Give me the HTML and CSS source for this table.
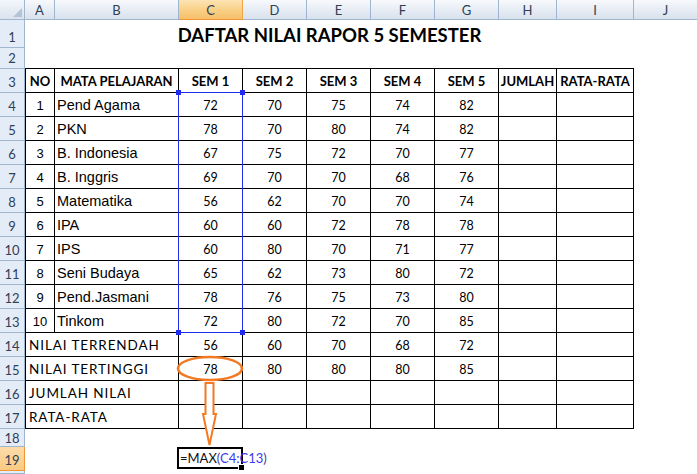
FILE: index.html
```html
<!DOCTYPE html>
<html>
<head>
<meta charset="utf-8">
<link rel="stylesheet" href="styles.css">
</head>
<body>
<div class="sheet">
  <div class="colheads">
    <div class="corner"><svg class="tri" width="10" height="10" viewBox="0 0 10 10"><polygon points="10,1 10,10 1,10" fill="#b4c4d6"/></svg></div>
    <div class="ch wa">A</div>
    <div class="ch wb">B</div>
    <div class="ch wc on">C</div>
    <div class="ch wc">D</div>
    <div class="ch wc">E</div>
    <div class="ch wc">F</div>
    <div class="ch wc">G</div>
    <div class="ch wh">H</div>
    <div class="ch wi">I</div>
    <div class="ch wc">J</div>
  </div>
  <div class="body">
    <div class="rowheads">
      <div class="rh r1">1</div>
      <div class="rh r2">2</div>
      <div class="rh">3</div>
      <div class="rh">4</div>
      <div class="rh">5</div>
      <div class="rh">6</div>
      <div class="rh">7</div>
      <div class="rh">8</div>
      <div class="rh">9</div>
      <div class="rh">10</div>
      <div class="rh">11</div>
      <div class="rh">12</div>
      <div class="rh">13</div>
      <div class="rh">14</div>
      <div class="rh">15</div>
      <div class="rh">16</div>
      <div class="rh">17</div>
      <div class="rh r18">18</div>
      <div class="rh on">19</div>
      <div class="rh rlast"></div>
    </div>
    <div class="cells">
      <div class="title-row"><div class="title">DAFTAR NILAI RAPOR 5 SEMESTER</div></div>
      <div class="row2"></div>
      <div class="tbl">
        <div class="c hd">NO</div><div class="c hd">MATA PELAJARAN</div><div class="c hd">SEM 1</div><div class="c hd">SEM 2</div><div class="c hd">SEM 3</div><div class="c hd">SEM 4</div><div class="c hd">SEM 5</div><div class="c hd">JUMLAH</div><div class="c hd">RATA-RATA</div>

        <div class="c no">1</div><div class="c sub">Pend Agama</div><div class="c">72</div><div class="c">70</div><div class="c">75</div><div class="c">74</div><div class="c">82</div><div class="c"></div><div class="c"></div>
        <div class="c no">2</div><div class="c sub">PKN</div><div class="c">78</div><div class="c">70</div><div class="c">80</div><div class="c">74</div><div class="c">82</div><div class="c"></div><div class="c"></div>
        <div class="c no">3</div><div class="c sub">B. Indonesia</div><div class="c">67</div><div class="c">75</div><div class="c">72</div><div class="c">70</div><div class="c">77</div><div class="c"></div><div class="c"></div>
        <div class="c no">4</div><div class="c sub">B. Inggris</div><div class="c">69</div><div class="c">70</div><div class="c">70</div><div class="c">68</div><div class="c">76</div><div class="c"></div><div class="c"></div>
        <div class="c no">5</div><div class="c sub">Matematika</div><div class="c">56</div><div class="c">62</div><div class="c">70</div><div class="c">70</div><div class="c">74</div><div class="c"></div><div class="c"></div>
        <div class="c no">6</div><div class="c sub">IPA</div><div class="c">60</div><div class="c">60</div><div class="c">72</div><div class="c">78</div><div class="c">78</div><div class="c"></div><div class="c"></div>
        <div class="c no">7</div><div class="c sub">IPS</div><div class="c">60</div><div class="c">80</div><div class="c">70</div><div class="c">71</div><div class="c">77</div><div class="c"></div><div class="c"></div>
        <div class="c no">8</div><div class="c sub">Seni Budaya</div><div class="c">65</div><div class="c">62</div><div class="c">73</div><div class="c">80</div><div class="c">72</div><div class="c"></div><div class="c"></div>
        <div class="c no">9</div><div class="c sub">Pend.Jasmani</div><div class="c">78</div><div class="c">76</div><div class="c">75</div><div class="c">73</div><div class="c">80</div><div class="c"></div><div class="c"></div>
        <div class="c no">10</div><div class="c sub">Tinkom</div><div class="c">72</div><div class="c">80</div><div class="c">72</div><div class="c">70</div><div class="c">85</div><div class="c"></div><div class="c"></div>

        <div class="c lbl">NILAI TERRENDAH</div><div class="c">56</div><div class="c">60</div><div class="c">70</div><div class="c">68</div><div class="c">72</div><div class="c"></div><div class="c"></div>
        <div class="c lbl">NILAI TERTINGGI</div><div class="c">78</div><div class="c">80</div><div class="c">80</div><div class="c">80</div><div class="c">85</div><div class="c"></div><div class="c"></div>
        <div class="c lbl">JUMLAH NILAI</div><div class="c"></div><div class="c"></div><div class="c"></div><div class="c"></div><div class="c"></div><div class="c"></div><div class="c"></div>
        <div class="c lbl">RATA-RATA</div><div class="c"></div><div class="c"></div><div class="c"></div><div class="c"></div><div class="c"></div><div class="c"></div><div class="c"></div>

        <div class="sel"><i class="h tl"></i><i class="h tr"></i><i class="h bl"></i><i class="h br"></i></div>
      </div>
      <div class="row19">
        <div class="active"><span class="ftxt">=MAX<span class="par">(</span><span class="ref">C4:C13</span><span class="par">)</span></span></div>
      </div>
    </div>
  </div>
  <svg class="annot" width="697" height="474" viewBox="0 0 697 474">
    <ellipse cx="210" cy="368.5" rx="32" ry="11.5" fill="none" stroke="#f27a25" stroke-width="2.6"/>
    <polygon points="205.5,383 213.5,383 213.5,414 216,414 209.5,445 203,414 205.5,414" fill="#fff" stroke="#f27a25" stroke-width="2"/>
  </svg>
</div>
</body>
</html>
```
FILE: styles.css
```css
html, body {
  margin: 0;
  padding: 0;
  background: #fff;
}
body {
  font-family: Lato, "Liberation Sans", sans-serif;
  color: #000;
}
.sheet {
  position: relative;
  width: 697px;
  height: 474px;
  overflow: hidden;
}

/* column headers */
.colheads {
  display: flex;
  height: 20px;
}
.corner {
  position: relative;
  flex: none;
  width: 25px;
  box-sizing: border-box;
  border-right: 1px solid #9eb6ce;
  border-bottom: 1px solid #9eb6ce;
  background: linear-gradient(#f4f7fb, #dae3ee);
}
.tri {
  position: absolute;
  right: 2px;
  bottom: 2px;
}
.ch {
  flex: none;
  box-sizing: border-box;
  border-right: 1px solid #9eb6ce;
  border-bottom: 1px solid #9eb6ce;
  background: linear-gradient(#f7f9fc 0%, #e6ecf4 55%, #d8e1ec 100%);
  display: flex;
  align-items: center;
  justify-content: center;
  font-size: 13px;
  color: #2f3f56;
}
.wa { width: 30px; }
.wb { width: 124px; }
.wc { width: 64px; }
.wh { width: 58px; }
.wi { width: 77px; }
.ch.on {
  background: linear-gradient(#fde4b4 0%, #f9cf84 55%, #f6c06a 100%);
  border-right-color: #f2a544;
  border-bottom-color: #f29536;
}

/* body */
.body {
  display: flex;
}
.rowheads {
  flex: none;
  width: 25px;
  height: 454px;
  display: flex;
  flex-direction: column;
}
.rh {
  flex: none;
  box-sizing: border-box;
  height: 24px;
  border-right: 1px solid #9eb6ce;
  border-bottom: 1px solid #9eb6ce;
  background: #e4ecf7;
  display: flex;
  align-items: flex-end;
  justify-content: center;
  padding-bottom: 3px;
  font-size: 13px;
  line-height: 14px;
  color: #2f3f56;
}
.rh.r1 { height: 28px; }
.rh.r2 { height: 21px; }
.rh.r18 { height: 18px; padding-bottom: 1px; }
.rh.on {
  background: linear-gradient(#fddcaa, #f9c982);
  border-right-color: #f29536;
  border-bottom-color: #f29536;
}
.rh.rlast {
  flex: 1;
  padding: 0;
}

.cells {
  flex: none;
  width: 672px;
  display: flex;
  flex-direction: column;
}
.title-row {
  width: 609px;
  height: 27px;
  display: flex;
  align-items: flex-end;
  justify-content: center;
  box-sizing: border-box;
  padding-bottom: 1px;
}
.title {
  font-weight: bold;
  font-size: 18.5px;
  line-height: 21px;
}
.row2 {
  height: 21px;
}

/* table */
.tbl {
  position: relative;
  display: grid;
  grid-template-columns: 28px 123px repeat(5, 63px) 57px 76px;
  grid-auto-rows: 23px;
  gap: 1px;
  width: 609px;
  box-sizing: border-box;
  border: 1px solid #000;
  background: #000;
}
.c {
  background: #fff;
  display: flex;
  align-items: center;
  justify-content: center;
  font-size: 12.5px;
  padding-top: 1px;
  box-sizing: border-box;
  white-space: nowrap;
}
.hd {
  font-weight: bold;
  font-size: 13px;
}
.no {
  font-family: "Liberation Sans", Arial, sans-serif;
  font-size: 13px;
}
.sub {
  justify-content: flex-start;
  padding-left: 2px;
  font-family: "Liberation Sans", Arial, sans-serif;
  font-size: 14.5px;
}
.lbl {
  grid-column: span 2;
  justify-content: flex-start;
  padding-left: 3px;
  font-size: 13.5px;
  letter-spacing: 0.9px;
}

/* selection overlay on C4:C13 */
.sel {
  position: absolute;
  grid-column: 3 / 4;
  grid-row: 2 / 12;
  top: -1px;
  left: -1px;
  right: -1px;
  bottom: -1px;
  border: 1px solid #1f2cf0;
  pointer-events: none;
}
.h {
  position: absolute;
  width: 5px;
  height: 5px;
  background: #1f2cf0;
}
.tl { left: -3px; top: -3px; }
.tr { right: -3px; top: -3px; }
.bl { left: -3px; bottom: -3px; }
.br { right: -3px; bottom: -3px; }

/* row 19 active cell */
.row19 {
  display: grid;
  grid-template-columns: 152px 66px;
  margin-top: 18px;
}
.active {
  grid-column: 2;
  position: relative;
  height: 22px;
  box-sizing: border-box;
  border: 2px solid #000;
  padding-left: 1px;
  white-space: nowrap;
  font-size: 13px;
  line-height: 18px;
}
.active::after {
  content: "";
  position: absolute;
  right: -4px;
  bottom: -4px;
  width: 5px;
  height: 5px;
  background: #000;
  border: 1px solid #fff;
}
.ftxt {
  position: relative;
  color: #111;
}
.par { color: #4b3d9e; }
.ref { color: #3a3af2; }

.annot {
  position: absolute;
  left: 0;
  top: 0;
  pointer-events: none;
}
```
